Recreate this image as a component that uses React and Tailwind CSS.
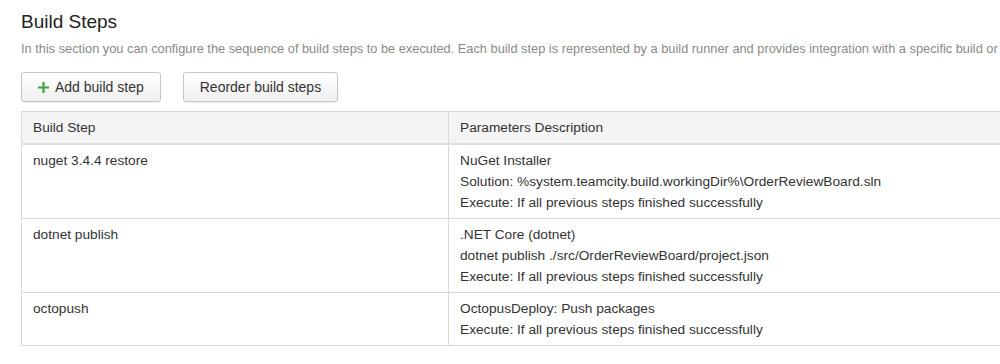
import React from "react";

const steps = [
    {
        name: "nuget 3.4.4 restore",
        params: [
            "NuGet Installer",
            "Solution: %system.teamcity.build.workingDir%\\OrderReviewBoard.sln",
            "Execute: If all previous steps finished successfully",
        ],
    },
    {
        name: "dotnet publish",
        params: [
            ".NET Core (dotnet)",
            "dotnet publish ./src/OrderReviewBoard/project.json",
            "Execute: If all previous steps finished successfully",
        ],
    },
    {
        name: "octopush",
        params: [
            "OctopusDeploy: Push packages",
            "Execute: If all previous steps finished successfully",
        ],
    },
];

function PlusIcon() {
    return (
        <svg width="11" height="11" viewBox="0 0 11 11" className="shrink-0">
            <path d="M5.5 0v11M0 5.5h11" stroke="#3ea43e" strokeWidth="2.2" />
        </svg>
    );
}

function Button({ children }) {
    return (
        <button className="h-[30px] flex items-center gap-[6px] px-4 rounded-[3px] border border-[#c6c6c6] bg-gradient-to-b from-white to-[#efefef] text-[14px] text-[#333] shadow-[0_1px_1px_rgba(0,0,0,0.08)]">
            {children}
        </button>
    );
}

export default function App() {
    return (
        <div className="w-[1000px] h-[364px] overflow-hidden bg-white font-['Liberation_Sans',Arial,sans-serif] pl-[21px]">
            <h1 className="mt-[11px] text-[19px] leading-[22px] text-[#222] font-normal">
                Build Steps
            </h1>
            <p className="mt-[7px] text-[12.8px] leading-[18px] text-[#8a8a8a] whitespace-nowrap">
                In this section you can configure the sequence of build steps to be executed. Each build step is represented by a build runner and provides integration with a specific build or test tool.
            </p>
            <div className="mt-[14px] flex gap-[22px]">
                <Button>
                    <PlusIcon />
                    Add build step
                </Button>
                <Button>Reorder build steps</Button>
            </div>
            <table className="mt-[9px] w-[1200px] border-collapse text-[13.7px] leading-[21px] text-[#333]">
                <thead>
                    <tr className="bg-[#f4f4f4] border-t border-[#d9d9d9] border-b-2 border-b-[#dedede]">
                        <th className="w-[427px] border-l border-r border-[#d9d9d9] px-[11px] py-[5px] text-left font-normal">
                            Build Step
                        </th>
                        <th className="px-[11px] py-[5px] text-left font-normal">
                            Parameters Description
                        </th>
                    </tr>
                </thead>
                <tbody>
                    {steps.map((s) => (
                        <tr key={s.name} className="border-b border-[#d9d9d9]">
                            <td className="align-top border-l border-r border-[#d9d9d9] px-[11px] py-[5px]">
                                {s.name}
                            </td>
                            <td className="align-top px-[11px] py-[5px]">
                                {s.params.map((p) => (
                                    <div key={p}>{p}</div>
                                ))}
                            </td>
                        </tr>
                    ))}
                </tbody>
            </table>
        </div>
    );
}
